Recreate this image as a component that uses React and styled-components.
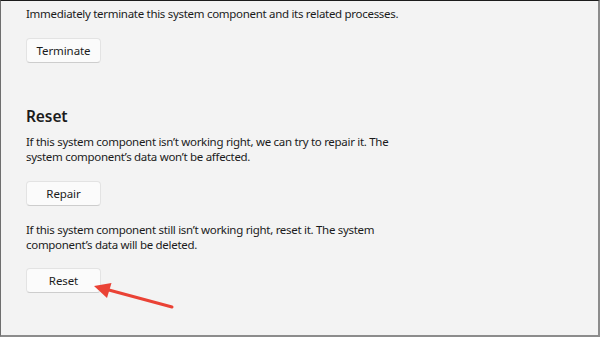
import React from "react";
import styled, { createGlobalStyle } from "styled-components";

const Global = createGlobalStyle`
  html, body {
    margin: 0;
    padding: 0;
    background: #f3f3f3;
  }
`;

const Page = styled.div`
  position: relative;
  box-sizing: border-box;
  width: 600px;
  height: 337px;
  overflow: hidden;
  background: #f3f3f3;
  border-top: 1px solid #1c1c1c;
  border-left: 1px solid #6e6e6e;
  border-right: 2px solid #8c8c8c;
  border-bottom: 2px solid #8c8c8c;
  padding: 5px 0 0 25px;
  font-family: "Noto Sans", "Open Sans", sans-serif;
  color: #1b1b1b;
`;

const Text = styled.p`
  margin: 0;
  margin-top: ${(p) => p.$top || 0}px;
  width: 440px;
  font-size: 11.5px;
  letter-spacing: -0.3px;
  line-height: 15px;
`;

const Heading = styled.h2`
  margin: 43px 0 0;
  font-size: 15.5px;
  font-weight: 600;
  line-height: 20px;
  letter-spacing: -0.1px;
`;

const Button = styled.button`
  display: block;
  box-sizing: border-box;
  margin-top: ${(p) => p.$top}px;
  width: 75px;
  height: 25px;
  padding: 0;
  border: 1px solid #e3e3e3;
  border-bottom-color: #cdcdcd;
  border-radius: 4px;
  background: #fbfbfb;
  font-family: inherit;
  font-size: 11.5px;
  letter-spacing: -0.1px;
  color: #1b1b1b;
`;

const Arrow = styled.svg`
  position: absolute;
  left: 0;
  top: 0;
  pointer-events: none;
`;

export default function App() {
  return (
    <>
      <Global />
      <Page>
        <Text>Immediately terminate this system component and its related processes.</Text>
        <Button $top={17}>Terminate</Button>
        <Heading>Reset</Heading>
        <Text $top={8}>
          If this system component isn’t working right, we can try to repair it. The
          <br />
          system component’s data won’t be affected.
        </Text>
        <Button $top={17}>Repair</Button>
        <Text $top={16}>
          If this system component still isn’t working right, reset it. The system
          <br />
          component’s data will be deleted.
        </Text>
        <Button $top={16}>Reset</Button>
        <Arrow width="600" height="337" viewBox="0 0 600 337">
          <line x1="171" y1="306" x2="106" y2="288.5" stroke="#ea4235" strokeWidth="3" strokeLinecap="round" />
          <polygon points="93,285 110.5,282 106,297" fill="#ea4235" />
        </Arrow>
      </Page>
    </>
  );
}
